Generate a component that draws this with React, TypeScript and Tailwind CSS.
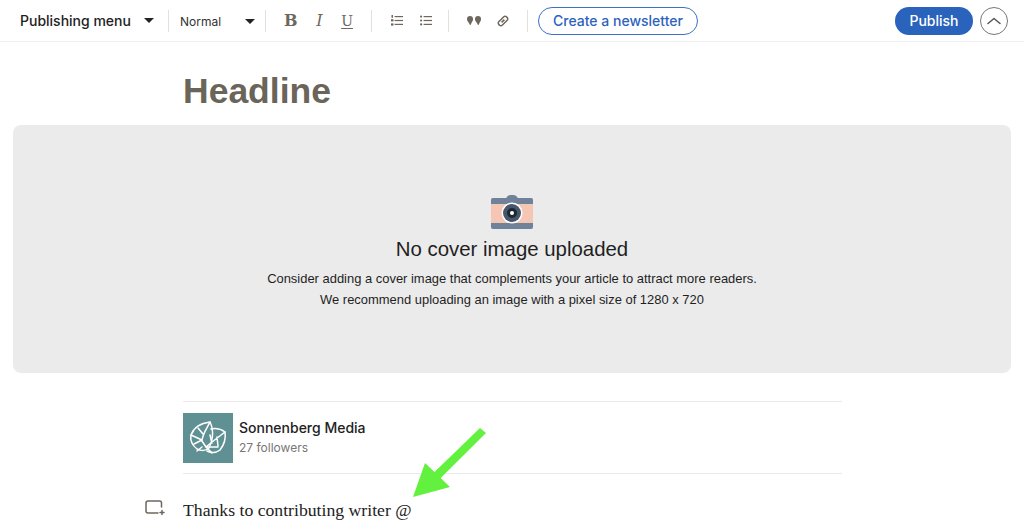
import React from "react"

const Caret = () => (
  <svg width="10" height="5" viewBox="0 0 10 5" className="fill-[#222]">
    <path d="M0 0h10L5 5z" />
  </svg>
)

const Divider = () => <div className="h-[22px] w-px bg-[#e4dfd8]" />

const Bold = () => <span className="font-['DejaVu_Serif',serif] text-[16px] font-bold leading-none text-[#6e675e]">B</span>
const Italic = () => <span className="font-['DejaVu_Serif',serif] text-[16px] italic leading-none text-[#6e675e]">I</span>
const Underline = () => <span className="font-['DejaVu_Serif',serif] text-[14px] leading-none text-[#6e675e] underline underline-offset-2">U</span>

const NumberList = () => (
  <svg width="12" height="11" viewBox="0 0 12 11" className="fill-[#6e675e]">
    <rect x="0.5" y="0" width="1.5" height="2.8" />
    <rect x="0" y="4.2" width="2.5" height="2.2" />
    <rect x="0" y="8.4" width="2.5" height="2.2" />
    <rect x="3.6" y="1" width="8.4" height="1.2" />
    <rect x="3.6" y="4.9" width="8.4" height="1.2" />
    <rect x="3.6" y="8.8" width="8.4" height="1.2" />
  </svg>
)

const BulletList = () => (
  <svg width="12" height="11" viewBox="0 0 12 11" className="fill-[#6e675e]">
    <circle cx="1.1" cy="1.6" r="1.1" />
    <circle cx="1.1" cy="5.5" r="1.1" />
    <circle cx="1.1" cy="9.4" r="1.1" />
    <rect x="3.6" y="1" width="8.4" height="1.2" />
    <rect x="3.6" y="4.9" width="8.4" height="1.2" />
    <rect x="3.6" y="8.8" width="8.4" height="1.2" />
  </svg>
)

const Quote = () => (
  <svg width="14" height="9" viewBox="0 0 14 9" className="fill-[#6e675e]">
    <circle cx="3" cy="3" r="3" />
    <path d="M0.4 4.5L5.8 4L3.6 9H3z" />
    <circle cx="11" cy="3" r="3" />
    <path d="M8.4 4.5L13.8 4L11.6 9H11z" />
  </svg>
)

const LinkIcon = () => (
  <svg width="12" height="12" viewBox="0 0 12 12" fill="none" className="stroke-[#6e675e]" strokeWidth="1.5">
    <path d="M6.8 1.8a1.8 1.8 0 0 1 2.6 0l.8.8a1.8 1.8 0 0 1 0 2.6l-5 5a1.8 1.8 0 0 1-2.6 0l-.8-.8a1.8 1.8 0 0 1 0-2.6zM4.6 7.4l2.8-2.8" />
  </svg>
)

const Camera = () => (
  <svg width="44" height="36" viewBox="0 0 44 36">
    <path d="M16 5q1-4 5-4h2q4 0 5 4z" fill="#6f8299" />
    <rect x="1" y="4" width="42" height="31" rx="2" fill="#f6c6b5" />
    <path d="M1 10V6a2 2 0 0 1 2-2h38a2 2 0 0 1 2 2v4zM1 29h42v4a2 2 0 0 1-2 2H3a2 2 0 0 1-2-2z" fill="#6f8299" />
    <circle cx="22" cy="19" r="10.5" fill="#fff" />
    <circle cx="22" cy="19" r="9" fill="#46566b" />
    <circle cx="22" cy="19" r="5" fill="#1f2733" />
    <circle cx="22" cy="19" r="2" fill="#fff" />
  </svg>
)

const LeafLogo = () => (
  <svg width="50" height="50" viewBox="0 0 50 50" fill="none" stroke="#fff" strokeWidth="1.5" strokeLinecap="round" strokeLinejoin="round">
    <rect width="50" height="50" fill="#5f9194" stroke="none" />
    <path d="M27 9C19 10 11 14 8 22c-1 5 1 10 6 14 4 2 9 2 12-1 4-7 5-18 1-26z" />
    <path d="M28 16c5-1 10 0 14 3 1 7-1 13-5 18-4 3-9 3-13 1" />
    <path d="M27 9c-3 6-8 13-8 19M8 22l11 5M11 31l8-4M15 15l5 6M19 28l4 6 6 6M14 38l5-4" />
    <path d="M42 19c-5 4-12 9-19 15M34 24l1 9M27 22l2 8M24 34l11 0" />
  </svg>
)

const CommentAdd = () => (
  <svg width="20" height="16" viewBox="0 0 20 16" fill="none" stroke="#6e675e" strokeWidth="1.5" strokeLinecap="round">
    <path d="M16.5 7V3a2 2 0 0 0-2-2H3a2 2 0 0 0-2 2v8a2 2 0 0 0 2 2h10" />
    <path d="M17 10.5v4M15 12.5h4" />
  </svg>
)

export default function App() {
  return (
    <div className="relative flex h-[528px] w-[1024px] flex-col overflow-hidden bg-white font-['Inter',sans-serif]">
      <div className="flex h-[42px] shrink-0 items-center border-b border-[#eeeeee] pl-5 pr-4">
        <span className="w-[111px] text-[14px] font-medium text-[#222]">Publishing menu</span>
        <span className="ml-[13px]"><Caret /></span>
        <span className="ml-[14px]"><Divider /></span>
        <span className="ml-[11px] mt-[2px] w-[65px] text-[12px] text-[#333]">Normal</span>
        <span className="mt-[2px]"><Caret /></span>
        <span className="ml-[10px]"><Divider /></span>
        <div className="ml-[18px] flex w-[69px] items-center justify-between">
          <Bold />
          <Italic />
          <Underline />
        </div>
        <span className="ml-[18px]"><Divider /></span>
        <div className="ml-[19px] flex items-center gap-[17px]">
          <NumberList />
          <BulletList />
        </div>
        <span className="ml-[16px]"><Divider /></span>
        <div className="ml-[18px] flex items-center gap-[16px]">
          <Quote />
          <LinkIcon />
        </div>
        <span className="ml-[18px]"><Divider /></span>
        <button className="ml-[10px] h-7 w-[160px] rounded-full border border-[#3c71c4] text-[14px] font-medium text-[#2d62bd]">
          Create a newsletter
        </button>
        <button className="ml-auto h-7 w-[78px] rounded-full bg-[#2a63bb] text-[14px] font-medium text-white">
          Publish
        </button>
        <div className="ml-[7px] flex h-7 w-7 items-center justify-center rounded-full border border-[#777]">
          <svg width="14" height="8" viewBox="0 0 14 8" fill="none" stroke="#555" strokeWidth="1.5" strokeLinecap="round" strokeLinejoin="round">
            <path d="M1 6.5L7 1.5l6 5" />
          </svg>
        </div>
      </div>

      <div className="flex h-[83px] shrink-0 items-center pl-[183px] pt-[17px]">
        <h1 className="font-['Liberation_Sans',sans-serif] text-[35.5px] font-bold leading-none text-[#6b6459]">Headline</h1>
      </div>

      <div className="mx-[13px] flex h-[248px] shrink-0 flex-col items-center rounded-lg bg-[#ebebeb] pt-[69px] font-['Liberation_Sans',sans-serif] text-[#1f1f1f]">
        <Camera />
        <h2 className="mt-[5px] text-[20.4px] leading-7">No cover image uploaded</h2>
        <p className="mt-[5px] text-[12.95px] leading-[21px]">Consider adding a cover image that complements your article to attract more readers.</p>
        <p className="text-[12.95px] leading-[21px]">We recommend uploading an image with a pixel size of 1280 x 720</p>
      </div>

      <div className="ml-[183px] mt-7 w-[659px] border-y border-[#e9e9e9] pb-[10px] pt-[11px]">
        <div className="flex items-center gap-[6px]">
          <LeafLogo />
          <div>
            <div className="text-[14px] font-medium leading-5 text-[#222]">Sonnenberg Media</div>
            <div className="text-[12px] leading-5 text-[#777]">27 followers</div>
          </div>
        </div>
      </div>

      <div className="ml-[145px] mt-[24px] flex items-center gap-[18px]">
        <span className="mb-[4px]"><CommentAdd /></span>
        <span className="font-['Liberation_Serif',serif] text-[17.7px] leading-6 text-[#222]">Thanks to contributing writer @</span>
      </div>

      <svg className="absolute left-[410px] top-[426px]" width="80" height="74" viewBox="0 0 80 74">
        <path d="M70 2L24.5 46 15 37 3 71l37-10-9.3-9L76 7z" fill="#63f13f" />
      </svg>
    </div>
  )
}
